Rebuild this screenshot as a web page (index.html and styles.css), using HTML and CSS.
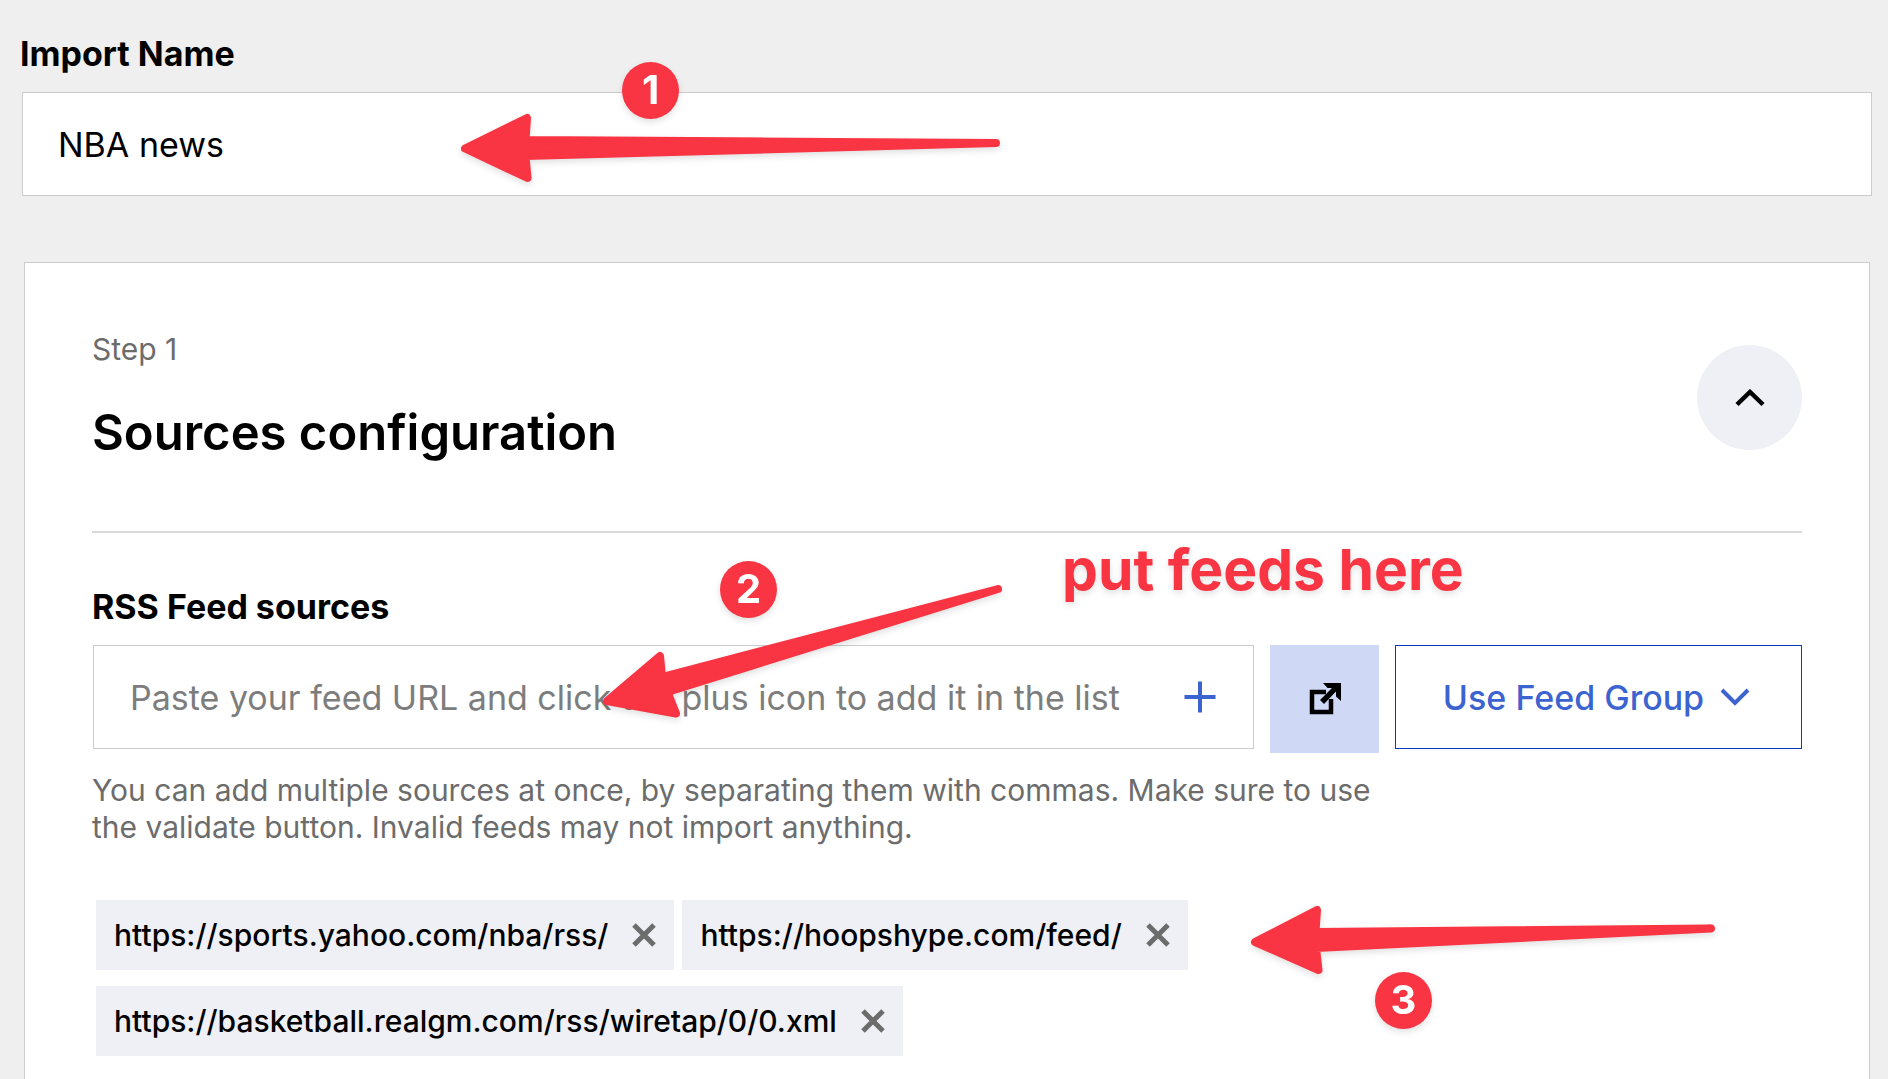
FILE: index.html
```html
<!DOCTYPE html>
<html lang="en">
<head>
<meta charset="utf-8">
<title>Feed import</title>
<link rel="stylesheet" href="styles.css">
</head>
<body>
<main class="page">
  <form class="import-form">
    <div class="field">
      <label class="field-label" for="import-name">Import Name</label>
      <input class="text-input" id="import-name" type="text" value="NBA news">
    </div>

    <section class="card">
      <header class="card-header">
        <div class="card-heading">
          <p class="step">Step 1</p>
          <h2 class="title">Sources configuration</h2>
        </div>
        <button class="collapse" type="button" aria-label="Collapse section">
          <svg width="30" height="18" viewBox="0 0 30 18"><path d="M2 15.500 15 3 28 15.500" fill="none" stroke="currentColor" stroke-width="4.500"/></svg>
        </button>
      </header>

      <label class="field-label" for="feed-url">RSS Feed sources</label>
      <div class="source-row">
        <div class="source-box">
          <input class="source-input" id="feed-url" type="text" placeholder="Paste your feed URL and click the plus icon to add it in the list">
          <button class="add" type="button" aria-label="Add feed">
            <svg width="32" height="32" viewBox="0 0 32 32"><path d="M16 0.500V31.500M0.500 16H31.500" stroke="currentColor" stroke-width="4"/></svg>
          </button>
        </div>
        <button class="validate" type="button" aria-label="Validate feed">
          <svg width="32" height="32" viewBox="0 0 32 32"><path d="M17 9H3V29H22V16" fill="none" stroke="currentColor" stroke-width="4.500"/><path d="M14 0H32V18L27 13.500V8.500L15 21 11 17 23 5H18.500Z" fill="currentColor"/></svg>
        </button>
        <button class="group" type="button">Use Feed Group
          <svg width="30" height="18" viewBox="0 0 30 18"><path d="M2 2 15 15 28 2" fill="none" stroke="currentColor" stroke-width="4"/></svg>
        </button>
      </div>
      <p class="help">You can add multiple sources at once, by separating them with commas. Make sure to use the validate button. Invalid feeds may not import anything.</p>

      <ul class="tags">
        <li class="tag">https://sports.yahoo.com/nba/rss/
          <button class="remove" type="button" aria-label="Remove feed"><svg width="24" height="24" viewBox="0 0 24 24"><path d="M2 2 22 22M22 2 2 22" stroke="currentColor" stroke-width="5"/></svg></button></li>
        <li class="tag">https://hoopshype.com/feed/
          <button class="remove" type="button" aria-label="Remove feed"><svg width="24" height="24" viewBox="0 0 24 24"><path d="M2 2 22 22M22 2 2 22" stroke="currentColor" stroke-width="5"/></svg></button></li>
        <li class="tag">https://basketball.realgm.com/rss/wiretap/0/0.xml
          <button class="remove" type="button" aria-label="Remove feed"><svg width="24" height="24" viewBox="0 0 24 24"><path d="M2 2 22 22M22 2 2 22" stroke="currentColor" stroke-width="5"/></svg></button></li>
      </ul>
    </section>
  </form>

  <div class="notes">
    <svg class="arrows" width="1888" height="1079" viewBox="0 0 1888 1079">
      <path d="M465 148.500 527 118 525.500 140 996 143 525.500 156 527.500 178Z"/>
      <path d="M607 701 660 656 662 677 998 589 667.500 692 676 713.500Z"/>
      <path d="M1255 942 1317 910 1315.500 932 1711 928.500 1316 948 1318.500 970Z"/>
    </svg>
    <span class="badge badge-1">1</span>
    <span class="badge badge-2">2</span>
    <span class="badge badge-3">3</span>
    <p class="callout">put feeds here</p>
  </div>
</main>
</body>
</html>
```
FILE: styles.css
```css
* { box-sizing: border-box; }
body {
  margin: 0;
  background: #efefef;
  color: #000;
  font-family: Inter, "Liberation Sans", sans-serif;
}
button, input { font: inherit; color: inherit; }
button { padding: 0; border: 0; background: none; }
svg { display: block; flex: none; }
p, h2, ul { margin: 0; padding: 0; }

.page { position: relative; }
.import-form {
  display: flex;
  flex-direction: column;
  min-height: 100vh;
  padding: 32px 16px 0 20px;
}
.field { display: flex; flex-direction: column; padding-left: 2px; }
.field .field-label { margin-left: -2px; }
.field-label { display: block; font-size: 34px; line-height: 44px; font-weight: 700; }
.text-input {
  height: 104px;
  margin-top: 16px;
  padding: 0 35px;
  border: 1px solid #ccc;
  border-radius: 0;
  background: #fff;
  font-size: 34px;
}
.card {
  flex: 1;
  margin: 66px 2px 0 4px;
  padding: 68px 67px 24px;
  border: 1px solid #ccc;
  border-bottom: 0;
  background: #fff;
}
.card-header {
  display: flex;
  justify-content: space-between;
  align-items: flex-start;
  height: 202px;
  margin-bottom: 52px;
  border-bottom: 2px solid #d9d9d9;
}
.step { color: #6c6c6c; font-size: 30px; line-height: 36px; }
.title { margin-top: 36px; font-size: 49px; line-height: 60px; font-weight: 600; }
.collapse {
  display: flex;
  align-items: center;
  justify-content: center;
  width: 105px;
  height: 105px;
  margin-top: 14px;
  border-radius: 50%;
  background: #eff0f5;
}
.source-row { display: flex; align-items: flex-start; gap: 16px; margin-top: 16px; padding-left: 1px; }
.source-box {
  display: flex;
  flex: 1;
  align-items: center;
  height: 104px;
  padding: 0 37px 0 36px;
  border: 1px solid #ccc;
}
.source-input { flex: 1; min-width: 0; padding: 0; border: 0; outline: 0; background: none; font-size: 34px; }
.source-input::placeholder { color: #7d7d7d; opacity: 1; }
.add { color: #3c64d1; }
.validate {
  display: flex;
  align-items: center;
  justify-content: center;
  width: 109px;
  height: 108px;
  background: #cfd8f4;
}
.group {
  display: flex;
  align-items: center;
  justify-content: center;
  gap: 16px;
  width: 407px;
  height: 104px;
  padding-right: 4px;
  border: 1px solid #0a3bbd;
  color: #3c64d1;
  font-size: 34px;
  font-weight: 500;
}
.help { max-width: 1310px; margin-top: 19px; color: #6c6c6c; font-size: 30px; line-height: 37px; }
.tags { display: flex; flex-wrap: wrap; gap: 16px 8px; max-width: 1200px; margin-top: 54px; padding-left: 4px; list-style: none; }
.tag {
  display: flex;
  align-items: center;
  gap: 24px;
  height: 70px;
  padding: 0 18px;
  background: #eff0f5;
  font-size: 30px;
  font-weight: 500;
}
.remove { color: #6c6c6c; }

.notes {
  position: absolute;
  inset: 0;
  overflow: hidden;
  pointer-events: none;
  filter: drop-shadow(0 3px 3px rgba(0, 0, 0, 0.12));
}
.arrows {
  position: absolute;
  top: 0;
  left: 0;
  fill: #f93543;
  stroke: #f93543;
  stroke-width: 8px;
  stroke-linejoin: round;
}
.badge {
  position: absolute;
  width: 57px;
  height: 57px;
  border-radius: 50%;
  background: #f93543;
  color: #fff;
  font-size: 40px;
  line-height: 56px;
  font-weight: 700;
  text-align: center;
}
.badge-1 { top: 62px; left: 622px; }
.badge-2 { top: 561px; left: 720px; }
.badge-3 { top: 972px; left: 1375px; }
.callout {
  position: absolute;
  top: 534px;
  left: 1062px;
  color: #f93543;
  font-size: 57px;
  line-height: 72px;
  font-weight: 700;
  white-space: nowrap;
}
```
